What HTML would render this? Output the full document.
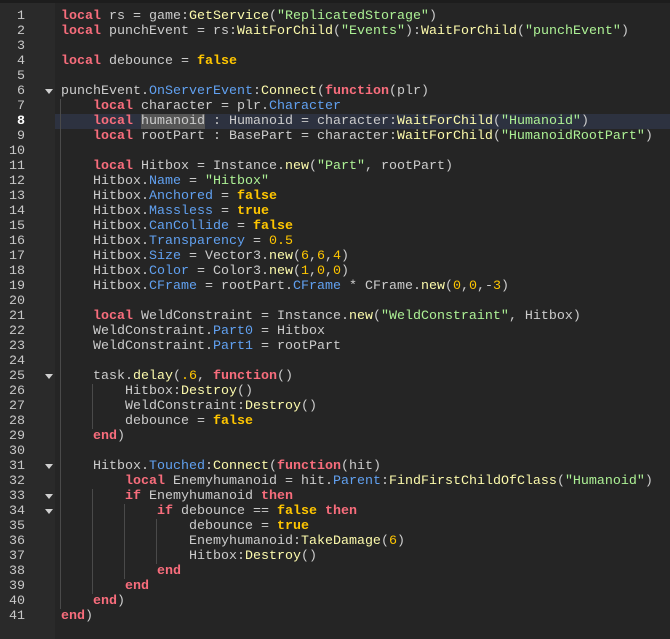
<!DOCTYPE html>
<html><head><style>
html,body{margin:0;padding:0;width:670px;height:639px;overflow:hidden;background:#252525;}
#top{position:absolute;left:0;top:0;width:670px;height:3px;background:#1d1d1d;}
#gut{position:absolute;left:0;top:3px;width:55px;height:636px;background:#2a2a2a;}
.ln{position:absolute;left:0;width:25px;text-align:right;font:13.33px "Liberation Mono",monospace;color:#c8c8c8;line-height:15px;}
#code{position:absolute;left:61px;top:9px;font:13.33px "Liberation Mono",monospace;line-height:15px;color:#cccccc;white-space:pre;}
.k{color:#f86d7c;font-weight:bold}.b{color:#ffc600;font-weight:bold}.f{color:#fdfbac}.p{color:#61a1f1}.s{color:#adf195}.n{color:#ffc600}
#hl{position:absolute;left:55px;top:114px;width:615px;height:15px;background:#2d3240;}
.g{position:absolute;width:1px;background:#4a4a4a;}
.arr{position:absolute;left:45px;width:0;height:0;border-left:4px solid transparent;border-right:4px solid transparent;border-top:5px solid #d0d0d0;}
</style></head><body>
<div id="top"></div><div id="gut"></div><div id="hl"></div>
<div id="lns"></div>
<div class="g" style="left:60px;top:99px;height:510px"></div>
<div class="g" style="left:92px;top:384px;height:45px"></div>
<div class="g" style="left:92px;top:489px;height:105px"></div>
<div class="g" style="left:124px;top:504px;height:75px"></div>
<div class="g" style="left:156px;top:519px;height:45px"></div>
<div class="arr" style="top:89px"></div>
<div class="arr" style="top:374px"></div>
<div class="arr" style="top:464px"></div>
<div class="arr" style="top:494px"></div>
<div class="arr" style="top:509px"></div>
<div id="code"><span class="k">local</span> rs = game:<span class="f">GetService</span>(<span class="s">"ReplicatedStorage"</span>)
<span class="k">local</span> punchEvent = rs:<span class="f">WaitForChild</span>(<span class="s">"Events"</span>):<span class="f">WaitForChild</span>(<span class="s">"punchEvent"</span>)

<span class="k">local</span> debounce = <span class="b">false</span>

punchEvent.<span class="p">OnServerEvent</span>:<span class="f">Connect</span>(<span class="k">function</span>(plr)
    <span class="k">local</span> character = plr.<span class="p">Character</span>
    <span class="k">local</span> <span style="background:#555">humanoid</span> : Humanoid = character:<span class="f">WaitForChild</span>(<span class="s">"Humanoid"</span>)
    <span class="k">local</span> rootPart : BasePart = character:<span class="f">WaitForChild</span>(<span class="s">"HumanoidRootPart"</span>)

    <span class="k">local</span> Hitbox = Instance.<span class="f">new</span>(<span class="s">"Part"</span>, rootPart)
    Hitbox.<span class="p">Name</span> = <span class="s">"Hitbox"</span>
    Hitbox.<span class="p">Anchored</span> = <span class="b">false</span>
    Hitbox.<span class="p">Massless</span> = <span class="b">true</span>
    Hitbox.<span class="p">CanCollide</span> = <span class="b">false</span>
    Hitbox.<span class="p">Transparency</span> = <span class="n">0.5</span>
    Hitbox.<span class="p">Size</span> = Vector3.<span class="f">new</span>(<span class="n">6</span>,<span class="n">6</span>,<span class="n">4</span>)
    Hitbox.<span class="p">Color</span> = Color3.<span class="f">new</span>(<span class="n">1</span>,<span class="n">0</span>,<span class="n">0</span>)
    Hitbox.<span class="p">CFrame</span> = rootPart.<span class="p">CFrame</span> * CFrame.<span class="f">new</span>(<span class="n">0</span>,<span class="n">0</span>,-<span class="n">3</span>)

    <span class="k">local</span> WeldConstraint = Instance.<span class="f">new</span>(<span class="s">"WeldConstraint"</span>, Hitbox)
    WeldConstraint.<span class="p">Part0</span> = Hitbox
    WeldConstraint.<span class="p">Part1</span> = rootPart

    task.<span class="f">delay</span>(<span class="n">.6</span>, <span class="k">function</span>()
        Hitbox:<span class="f">Destroy</span>()
        WeldConstraint:<span class="f">Destroy</span>()
        debounce = <span class="b">false</span>
    <span class="k">end</span>)

    Hitbox.<span class="p">Touched</span>:<span class="f">Connect</span>(<span class="k">function</span>(hit)
        <span class="k">local</span> Enemyhumanoid = hit.<span class="p">Parent</span>:<span class="f">FindFirstChildOfClass</span>(<span class="s">"Humanoid"</span>)
        <span class="k">if</span> Enemyhumanoid <span class="k">then</span>
            <span class="k">if</span> debounce == <span class="b">false</span> <span class="k">then</span>
                debounce = <span class="b">true</span>
                Enemyhumanoid:<span class="f">TakeDamage</span>(<span class="n">6</span>)
                Hitbox:<span class="f">Destroy</span>()
            <span class="k">end</span>
        <span class="k">end</span>
    <span class="k">end</span>)
<span class="k">end</span>)</div>
<script>
var h='';for(var i=1;i<=41;i++){h+='<div class="ln" style="top:'+(9+(i-1)*15)+'px;'+(i==8?'color:#fff;font-weight:bold':'')+'">'+i+'</div>';}
document.getElementById('lns').innerHTML=h;
</script>
</body></html>
